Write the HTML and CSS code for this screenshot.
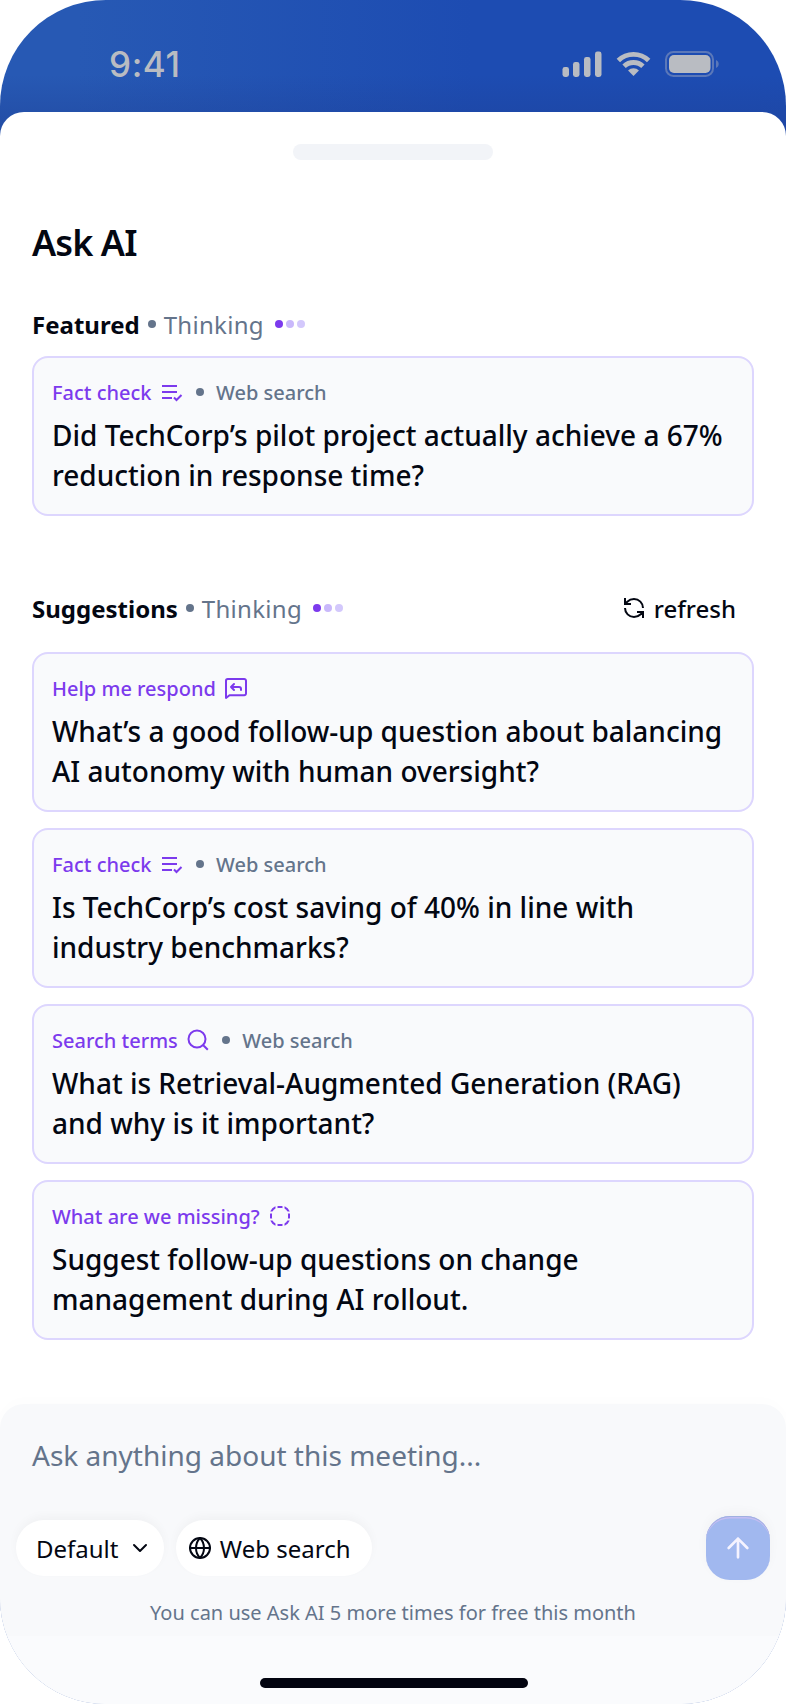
FILE: index.html
```html
<!DOCTYPE html>
<html lang="en">
<head>
    <meta charset="UTF-8">
    <meta name="viewport" content="width=device-width, initial-scale=1.0">
    <title>Ask AI</title>
    <link rel="stylesheet" href="styles.css">
</head>
<body>
    <div class="screen">
        <div class="status-bar">
            <span class="time">9:41</span>
            <div class="status-icons">
                <svg width="40" height="26" viewBox="0 0 40 26" fill="#b9bcc2">
                    <rect x="0.5" y="16" width="6.5" height="10" rx="2.4"/>
                    <rect x="11" y="11" width="6.5" height="15" rx="2.4"/>
                    <rect x="22" y="6" width="6.5" height="20" rx="2.4"/>
                    <rect x="33" y="0.5" width="6.5" height="25.5" rx="2.4"/>
                </svg>
                <svg width="35" height="26" viewBox="0 0 36 26" fill="none" stroke="#b9bcc2" stroke-width="5">
                    <path d="M2.4 9.4a22.4 22.4 0 0 1 31.2 0"/>
                    <path d="M8.3 15.4a14 14 0 0 1 19.4 0"/>
                    <path d="M12.4 19.6a8 8 0 0 1 11.2 0L18 25.3z" fill="#b9bcc2" stroke="none"/>
                </svg>
                <svg width="54" height="26" viewBox="0 0 54 26">
                    <rect x="1" y="1" width="47" height="24" rx="7.5" fill="none" stroke="#b9bcc2" stroke-opacity="0.4" stroke-width="2"/>
                    <rect x="4" y="4" width="41.5" height="18" rx="5" fill="#b9bcc2"/>
                    <path d="M51 9v8c1.600-.7 2.700-2.200 2.700-4s-1.100-3.300-2.700-4z" fill="#b9bcc2" fill-opacity="0.4"/>
                </svg>
            </div>
        </div>

        <div class="sheet">
            <div class="handle"></div>
            <h1>Ask AI</h1>

            <div class="section-header">
                <strong>Featured</strong>
                <span class="dot"></span>
                <span class="thinking">Thinking</span>
                <span class="loader"><i></i><i></i><i></i></span>
            </div>
            <div class="card">
                <div class="meta">
                    <span>Fact check</span>
                    <svg class="icon flat" viewBox="0 0 24 24"><path d="M2 6h15M2 12h15M2 18h10M14 17.500l2.500 2.500 5-5"/></svg>
                    <span class="dot"></span>
                    <span class="source">Web search</span>
                </div>
                <p>Did TechCorp’s pilot project actually achieve a 67% reduction in response time?</p>
            </div>

            <div class="section-header suggestions">
                <strong>Suggestions</strong>
                <span class="dot"></span>
                <span class="thinking">Thinking</span>
                <span class="loader"><i></i><i></i><i></i></span>
                <button class="refresh" type="button">
                    <svg class="icon flat" viewBox="0 0 24 24"><path d="M21 12a9 9 0 0 0-9-9 9.750 9.750 0 0 0-6.740 2.740L4 7M3 2v6h6M3 12a9 9 0 0 0 9 9 9.750 9.750 0 0 0 6.740-2.740L20 17M15 16h6v6"/></svg>
                    refresh
                </button>
            </div>
            <div class="card-list">
                <div class="card">
                    <div class="meta">
                        <span>Help me respond</span>
                        <svg class="icon" viewBox="0 0 24 24"><path d="M22 17.500a1.800 1.800 0 0 1-1.800 1.800H5.500L2 22V4.800A1.800 1.800 0 0 1 3.800 3h16.400A1.800 1.800 0 0 1 22 4.800zM10 8l-3 3 3 3M17 14v-1a2 2 0 0 0-2-2H7"/></svg>
                    </div>
                    <p>What’s a good follow-up question about balancing AI autonomy with human oversight?</p>
                </div>
                <div class="card">
                    <div class="meta">
                        <span>Fact check</span>
                        <svg class="icon flat" viewBox="0 0 24 24"><path d="M2 6h15M2 12h15M2 18h10M14 17.500l2.500 2.500 5-5"/></svg>
                        <span class="dot"></span>
                        <span class="source">Web search</span>
                    </div>
                    <p>Is TechCorp’s cost saving of 40% in line with<br>industry benchmarks?</p>
                </div>
                <div class="card">
                    <div class="meta">
                        <span>Search terms</span>
                        <svg class="icon flat" viewBox="0 0 24 24"><circle cx="11" cy="11" r="8.500"/><path d="m21.800 21.800-4.800-4.800"/></svg>
                        <span class="dot"></span>
                        <span class="source">Web search</span>
                    </div>
                    <p>What is Retrieval-Augmented Generation (RAG)<br>and why is it important?</p>
                </div>
                <div class="card">
                    <div class="meta">
                        <span>What are we missing?</span>
                        <svg class="icon flat" viewBox="0 0 24 24"><rect x="3" y="3" width="18" height="18" rx="7"/><path class="gaps" d="M8.500 1v4.500M15.500 1v4.500M8.500 18.500v4.500M15.500 18.500v4.500M1 8.500h4.500M1 15.500h4.500M18.500 8.500h4.500M18.500 15.500h4.500"/></svg>
                    </div>
                    <p>Suggest follow-up questions on change<br>management during AI rollout.</p>
                </div>
            </div>

            <div class="composer">
                <div class="prompt">Ask anything about this meeting...</div>
                <div class="actions">
                    <button class="pill" type="button">
                        Default
                        <svg class="icon" viewBox="0 0 24 24"><path d="m6 9 6 6 6-6"/></svg>
                    </button>
                    <button class="pill web" type="button">
                        <svg class="icon" viewBox="0 0 24 24"><circle cx="12" cy="12" r="10"/><path d="M12 2a14.500 14.500 0 0 0 0 20 14.500 14.500 0 0 0 0-20M2 12h20"/></svg>
                        Web search
                    </button>
                    <button class="send" type="button" aria-label="Send">
                        <svg viewBox="0 0 24 24"><path d="m5 12 7-7 7 7M12 19V5"/></svg>
                    </button>
                </div>
                <div class="hint">You can use Ask AI 5 more times for free this month</div>
            </div>
            <div class="home-bar"><span></span></div>
        </div>
    </div>
</body>
</html>
```
FILE: styles.css
```css
* {
    box-sizing: border-box;
}
body {
    margin: 0;
    background: #fff;
    color: #030712;
    font-family: "Noto Sans", sans-serif;
}
h1, p {
    margin: 0;
}
button {
    border: none;
    background: none;
    font: inherit;
    color: inherit;
    padding: 0;
}
.screen {
    width: 786px;
    height: 1704px;
    overflow: hidden;
    border-radius: 106px;
    background: linear-gradient(180deg, rgba(30, 64, 150, 0) 75px, rgba(30, 64, 150, 0.45) 125px), linear-gradient(90deg, #2759b4 10%, #1d4cb2 60%);
}

/* status bar */
.status-bar {
    display: flex;
    justify-content: space-between;
    height: 112px;
    padding: 51px 67px 0 109px;
}
.time {
    font-family: Inter, sans-serif;
    font-size: 35px;
    font-weight: 500;
    line-height: 26px;
    letter-spacing: 0.6px;
    color: #b9bcc2;
}
.status-icons {
    display: flex;
    gap: 14px;
}

/* sheet */
.sheet {
    display: flex;
    flex-direction: column;
    height: 1592px;
    background: #fff;
    border-radius: 24px 24px 0 0;
}
.handle {
    width: 200px;
    height: 16px;
    margin: 32px auto 0;
    border-radius: 8px;
    background: #f2f4f8;
}
h1 {
    margin: 59px 32px 0;
    font-size: 36px;
    font-weight: 600;
    line-height: 48px;
    letter-spacing: -0.9px;
}
.section-header {
    display: flex;
    align-items: center;
    height: 32px;
    margin: 41px 32px 16px;
    font-size: 24px;
}
.section-header strong {
    font-weight: 700;
}
.dot {
    width: 8px;
    height: 8px;
    border-radius: 50%;
    background: #64748b;
}
.section-header .dot {
    margin: 0 8px;
}
.thinking {
    color: #64748b;
    letter-spacing: 0.3px;
}
.loader {
    display: flex;
    gap: 3px;
    margin-left: 11px;
}
.loader i {
    width: 8px;
    height: 8px;
    border-radius: 50%;
    background: #c9b8fb;
}
.loader i:first-child {
    background: #7c3aed;
}
.loader i:last-child {
    background: #d3c8fc;
}
.suggestions {
    margin: 76px 32px 28px;
}
.refresh {
    display: flex;
    align-items: center;
    gap: 8px;
    margin-left: auto;
    margin-right: 18px;
    font-weight: 500;
}
.icon {
    width: 24px;
    height: 24px;
    fill: none;
    stroke: currentColor;
    stroke-width: 2;
    stroke-linecap: round;
    stroke-linejoin: round;
}
.icon.flat {
    stroke-linecap: butt;
    stroke-linejoin: miter;
}
.icon .gaps {
    stroke: #f9fafc;
}

/* cards */
.card-list {
    display: flex;
    flex-direction: column;
    gap: 16px;
}
.card {
    height: 160px;
    margin: 0 32px;
    padding: 20px 18px 0;
    border: 2px solid #ddd6fe;
    border-radius: 16px;
    background: #f9fafc;
}
.meta {
    display: flex;
    align-items: center;
    height: 28px;
    font-size: 20px;
    font-weight: 500;
    color: #7c3aed;
}
.meta .icon {
    margin-left: 8px;
}
.meta .dot {
    margin: 0 12.5px 0 12px;
}
.meta .source {
    color: #64748b;
}
.card p {
    margin-top: 9px;
    font-size: 28px;
    font-weight: 500;
    line-height: 40px;
}

/* composer */
.composer {
    height: 232px;
    margin-top: 64px;
    padding: 31px 16px 0;
    border-radius: 24px 24px 0 0;
    background: #f8f9fb;
    box-shadow: 0 -4px 16px rgba(15, 23, 42, 0.01);
}
.prompt {
    padding-left: 16px;
    font-size: 28px;
    line-height: 40px;
    color: #64748b;
}
.actions {
    display: flex;
    align-items: center;
    gap: 12px;
    margin-top: 41px;
    height: 64px;
}
.pill {
    display: flex;
    align-items: center;
    justify-content: space-between;
    width: 148px;
    height: 56px;
    padding: 0 12px 0 20px;
    border-radius: 28px;
    background: #fff;
    font-size: 24px;
    box-shadow: 0 -4px 10px rgba(15, 23, 42, 0.03);
}
.pill.web {
    width: 196px;
    padding: 0 21.5px 0 12px;
}
.send {
    display: flex;
    align-items: center;
    justify-content: center;
    width: 64px;
    height: 64px;
    margin-left: auto;
    border-radius: 24px;
    background: #a1b8ef;
    box-shadow: inset 0 1px 0 #9fb0e0, inset 0 3px 0 -0.5px #c3bdf3, 0 -4px 12px rgba(15, 23, 42, 0.03);
}
.send svg {
    width: 32px;
    height: 32px;
    fill: none;
    stroke: #f5f3ff;
    stroke-width: 2;
    stroke-linecap: round;
    stroke-linejoin: round;
}
.hint {
    margin-top: 19px;
    font-size: 20px;
    line-height: 28px;
    text-align: center;
    color: #64748b;
}
.home-bar {
    flex: 1;
    padding-top: 42px;
    background: #fafbfd;
}
.home-bar span {
    display: block;
    width: 268px;
    height: 10px;
    margin: 0 auto 0 260px;
    border-radius: 5px;
    background: #020410;
}
```
